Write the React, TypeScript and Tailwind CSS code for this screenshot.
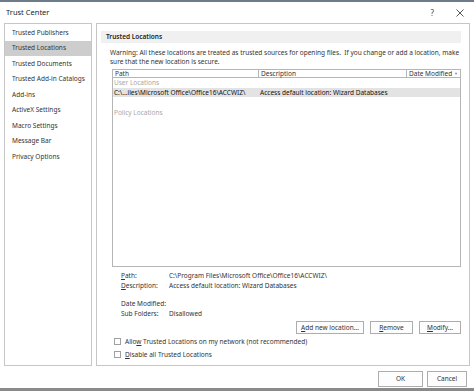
import React from 'react';

const navItems = [
  'Trusted Publishers',
  'Trusted Locations',
  'Trusted Documents',
  'Trusted Add-in Catalogs',
  'Add-ins',
  'ActiveX Settings',
  'Macro Settings',
  'Message Bar',
  'Privacy Options',
];

const Btn = ({ children, className = '' }: { children: React.ReactNode; className?: string }) => (
  <div
    className={`flex items-center justify-center border border-[#adadad] bg-[#fdfdfd] text-[#333] ${className}`}
  >
    {children}
  </div>
);

const App = () => {
  return (
    <div
      className="w-[474px] h-[391px] flex flex-col bg-white text-[6.5px] text-[#333] overflow-hidden"
      style={{ fontFamily: '"Noto Sans", "Open Sans", sans-serif' }}
    >
      {/* top strip */}
      <div className="h-[2px] bg-[#6d7a8c]" />

      {/* title bar */}
      <div className="h-[21px] flex items-center pl-[6px] pr-[10px]">
        <span className="text-[7.5px] text-[#222]">Trust Center</span>
        <span className="ml-auto text-[8px] text-[#444] mr-[22px]">?</span>
        <svg width="8" height="8" viewBox="0 0 8 8" className="text-[#444]">
          <path d="M0.5 0.5 L7.5 7.5 M7.5 0.5 L0.5 7.5" stroke="currentColor" strokeWidth="0.9" />
        </svg>
      </div>

      {/* body */}
      <div className="flex gap-[4px] px-[4px] h-[343px]">
        {/* left nav */}
        <div className="w-[88px] border border-[#c6c6c6] bg-white pt-[1px]">
          {navItems.map((item, i) => (
            <div
              key={item}
              className={`h-[15.5px] flex items-center pl-[7px] ${
                i === 1 ? 'bg-[#cdcdcd]' : ''
              }`}
            >
              {item}
            </div>
          ))}
        </div>

        {/* right panel */}
        <div className="flex-1 border border-[#c6c6c6] bg-white pt-[7px] pl-[4px] pr-[8px] flex flex-col">
          <div className="h-[12px] bg-[#f0f0f0] flex items-center pl-[5px] text-[#222] font-semibold">
            Trusted Locations
          </div>

          <div className="pl-[9px] pt-[5px] leading-[9px]">
            Warning: All these locations are treated as trusted sources for opening files.&nbsp; If you change or add a
            location, make sure that the new location is secure.
          </div>

          {/* table */}
          <div className="ml-[11px] mt-[3px] flex flex-col">
            <div className="flex h-[9px] leading-[8px]">
              <div className="w-[147px] border border-[#b5b5b5] pl-[2px]">Path</div>
              <div className="w-[148px] border border-l-0 border-[#b5b5b5] pl-[2px]">Description</div>
              <div className="flex-1 border border-l-0 border-[#b5b5b5] pl-[2px] flex items-center justify-between pr-[2px]">
                <span>Date Modified</span>
                <span className="text-[4px] text-[#888]">▼</span>
              </div>
            </div>
            <div className="h-[189px] border border-t-0 border-[#b5b5b5] flex flex-col">
              <div className="h-[10px] flex items-center pl-[1px] text-[#a8a8a8]">User Locations</div>
              <div className="h-[9px] flex items-center bg-[#e3e3e3] text-[#111]">
                <span className="w-[147px] pl-[1px]">C:\...iles\Microsoft Office\Office16\ACCWIZ\</span>
                <span>Access default location: Wizard Databases</span>
              </div>
              <div className="h-[11px]" />
              <div className="h-[9px] flex items-center pl-[1px] text-[#a8a8a8]">Policy Locations</div>
            </div>
          </div>

          {/* details */}
          <div className="ml-[20px] mt-[4px] flex flex-col">
            <div className="flex h-[10px] items-center">
              <span className="w-[48px]">
                <u>P</u>ath:
              </span>
              <span>C:\Program Files\Microsoft Office\Office16\ACCWIZ\</span>
            </div>
            <div className="flex h-[10px] items-center">
              <span className="w-[48px]">
                <u>D</u>escription:
              </span>
              <span>Access default location: Wizard Databases</span>
            </div>
            <div className="h-[8px]" />
            <div className="flex h-[10px] items-center">
              <span className="w-[48px]">Date Modified:</span>
            </div>
            <div className="flex h-[10px] items-center">
              <span className="w-[48px]">Sub Folders:</span>
              <span>Disallowed</span>
            </div>
          </div>

          <div className="flex justify-end gap-[6px] mt-[2px]">
            <Btn className="w-[68px] h-[13px]">
              <span>
                <u>A</u>dd new location...
              </span>
            </Btn>
            <Btn className="w-[43px] h-[13px]">
              <span>
                <u>R</u>emove
              </span>
            </Btn>
            <Btn className="w-[42px] h-[13px]">
              <span>
                <u>M</u>odify...
              </span>
            </Btn>
          </div>

          <div className="ml-[13px] mt-[4px] flex flex-col gap-[6px]">
            <label className="flex items-center gap-[4px] h-[7px]">
              <span className="w-[7px] h-[7px] border border-[#a0a0a0] bg-white" />
              <span>
                Allo<u>w</u> Trusted Locations on my network (not recommended)
              </span>
            </label>
            <label className="flex items-center gap-[4px] h-[7px]">
              <span className="w-[7px] h-[7px] border border-[#a0a0a0] bg-white" />
              <span>
                <u>D</u>isable all Trusted Locations
              </span>
            </label>
          </div>
        </div>
      </div>

      {/* footer */}
      <div className="flex justify-end gap-[4px] pr-[7px] pt-[5px] h-[22px]">
        <Btn className="w-[45px] h-[16px]">OK</Btn>
        <Btn className="w-[40px] h-[16px]">Cancel</Btn>
      </div>
      <div className="flex-1 bg-[#8a8a8a]" />
    </div>
  );
};

export default App;
